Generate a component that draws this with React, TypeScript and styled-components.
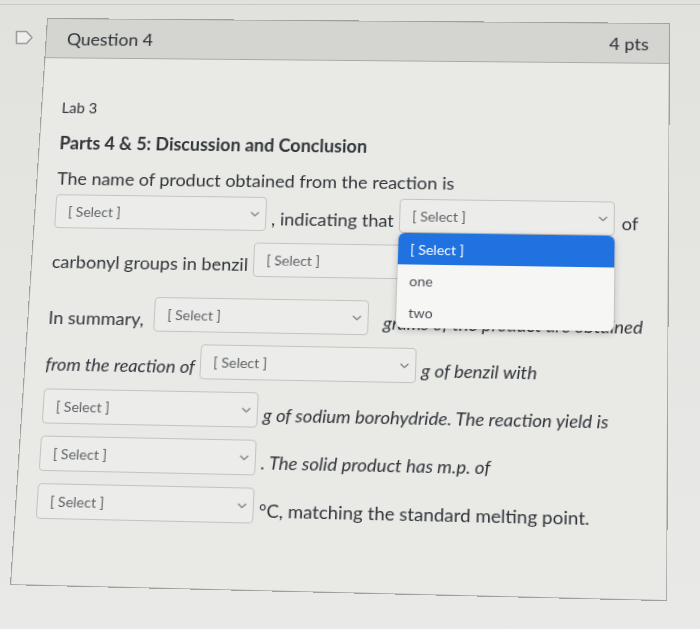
import React from 'react';
import styled, { createGlobalStyle } from 'styled-components';

const GlobalStyle = createGlobalStyle`
  html, body {
    margin: 0;
    padding: 0;
  }
  body {
    width: 700px;
    height: 629px;
    overflow: hidden;
    background: linear-gradient(180deg, #e1e2de 0%, #e5e6e2 45%, #e9e9e8 100%);
    font-family: Lato, "Open Sans", "Liberation Sans", sans-serif;
    color: #30353a;
  }
`;

const CARD_W = 630;
const CARD_H = 578;

// where the card's corners land in the photo, relative to its own top-left
const CARD_QUAD: number[][] = [
  [7, -2],
  [630, 3],
  [627, 581],
  [-30, 565],
];

// square-to-quad homography, as a css matrix3d
const quadToMatrix = (w: number, h: number, q: number[][]) => {
  const [[x0, y0], [x1, y1], [x2, y2], [x3, y3]] = q;
  const dx1 = x1 - x2;
  const dx2 = x3 - x2;
  const dx3 = x0 - x1 + x2 - x3;
  const dy1 = y1 - y2;
  const dy2 = y3 - y2;
  const dy3 = y0 - y1 + y2 - y3;
  const den = dx1 * dy2 - dx2 * dy1;
  const g = (dx3 * dy2 - dx2 * dy3) / den;
  const k = (dx1 * dy3 - dx3 * dy1) / den;
  const a = x1 - x0 + g * x1;
  const b = x3 - x0 + k * x3;
  const d = y1 - y0 + g * y1;
  const e = y3 - y0 + k * y3;
  const m = [a / w, d / w, 0, g / w, b / h, e / h, 0, k / h, 0, 0, 1, 0, x0, y0, 0, 1];
  return `matrix3d(${m.map((v) => v.toFixed(6)).join(',')})`;
};

const Page = styled.div`
  padding-top: 4px;
`;

const TopRule = styled.div`
  height: 1px;
  background: #c9cac6;
`;

const Stage = styled.div`
  display: flex;
  align-items: flex-start;
  padding: 15px 0 0 13px;
`;

const FlagSlot = styled.div`
  width: 27px;
  flex: none;
  padding: 9px 0 0 2px;
  box-sizing: border-box;
`;

const Card = styled.div`
  width: ${CARD_W}px;
  height: ${CARD_H}px;
  flex: none;
  box-sizing: border-box;
  border: 1px solid #9fa09d;
  background: #e9e9e6;
  transform-origin: 0 0;
  transform: ${quadToMatrix(CARD_W, CARD_H, CARD_QUAD)};
`;

const Header = styled.div`
  height: 42px;
  box-sizing: border-box;
  display: flex;
  align-items: center;
  justify-content: space-between;
  padding: 0 20px 0 21px;
  background: #d4d5d1;
  border-bottom: 1px solid #a9aaa7;
  font-size: 18px;
  color: #2c3136;
`;

const Body = styled.div`
  padding: 42px 20px 0 20px;
`;

const LabLine = styled.div`
  font-size: 15px;
  line-height: 21px;
`;

const Heading = styled.div`
  margin-top: 13px;
  font-size: 18px;
  line-height: 26px;
  font-weight: 700;
`;

const Para = styled.div`
  margin-top: 11px;
  font-size: 18px;
  line-height: 26px;
`;

const Row = styled.div<{ $gap?: number }>`
  display: flex;
  align-items: flex-end;
  gap: 5px;
  height: 35px;
  margin-top: ${(p) => p.$gap ?? 12}px;
`;

const Words = styled.span<{ $italic?: boolean; $lead?: number; $trail?: number }>`
  font-size: 18px;
  line-height: 26px;
  white-space: nowrap;
  font-style: ${(p) => (p.$italic ? 'italic' : 'normal')};
  padding-left: ${(p) => p.$lead ?? 0}px;
  padding-right: ${(p) => p.$trail ?? 0}px;
`;

const SelectBox = styled.div`
  position: relative;
  width: 212px;
  height: 35px;
  flex: none;
  box-sizing: border-box;
  display: flex;
  align-items: center;
  justify-content: space-between;
  padding: 0 6px 0 12px;
  border: 1px solid #c3c4c1;
  border-radius: 4px;
  background: #ecedea;
  font-size: 14px;
  color: #5f6366;
`;

const Menu = styled.div`
  position: absolute;
  top: calc(100% + 1px);
  left: -1px;
  right: -1px;
  z-index: 10;
  background: #f6f6f5;
  border-radius: 6px;
  overflow: hidden;
  box-shadow: 0 2px 7px rgba(0, 0, 0, 0.22), 0 0 0 1px rgba(0, 0, 0, 0.06);
`;

const MenuItem = styled.div<{ $active?: boolean }>`
  height: 32px;
  display: flex;
  align-items: center;
  padding-left: 12px;
  font-size: 14px;
  background: ${(p) => (p.$active ? '#1f72df' : 'transparent')};
  color: ${(p) => (p.$active ? '#ffffff' : '#4a4e52')};
`;

const Chevron = () => (
  <svg width="9" height="6" viewBox="0 0 9 6">
    <path d="M1 1.2 L4.5 4.6 L8 1.2" fill="none" stroke="#7d8083" strokeWidth="1.3" strokeLinecap="round" />
  </svg>
);

const FlagIcon = () => (
  <svg width="19" height="15" viewBox="0 0 19 15">
    <path
      d="M1.5 1.5 H11.5 L17 7.5 L11.5 13.5 H1.5 Z"
      fill="#eeeeec"
      stroke="#9c9ea0"
      strokeWidth="1.6"
      strokeLinejoin="round"
    />
  </svg>
);

const Select: React.FC<{ open?: boolean; options?: string[] }> = ({ open, options = [] }) => (
  <SelectBox>
    <span>[ Select ]</span>
    <Chevron />
    {open && (
      <Menu>
        <MenuItem $active>[ Select ]</MenuItem>
        {options.map((o) => (
          <MenuItem key={o}>{o}</MenuItem>
        ))}
      </Menu>
    )}
  </SelectBox>
);

export default function App() {
  return (
    <Page>
      <GlobalStyle />
      <TopRule />
      <Stage>
        <FlagSlot>
          <FlagIcon />
        </FlagSlot>
        <Card>
          <Header>
            <span>Question 4</span>
            <span>4 pts</span>
          </Header>
          <Body>
            <LabLine>Lab 3</LabLine>
            <Heading>Parts 4 &amp; 5: Discussion and Conclusion</Heading>
            <Para>The name of product obtained from the reaction is</Para>
            <Row $gap={4}>
              <Select />
              <Words>, indicating that</Words>
              <Select open options={['one', 'two']} />
              <Words $lead={2}>of</Words>
            </Row>
            <Row>
              <Words>carbonyl groups in benzil</Words>
              <Select />
            </Row>
            <Row $gap={22}>
              <Words $trail={5}>In summary,</Words>
              <Select />
              <Words $italic $lead={9}>
                grams of the product are obtained
              </Words>
            </Row>
            <Row>
              <Words $italic>from the reaction of</Words>
              <Select />
              <Words $italic>g of benzil with</Words>
            </Row>
            <Row>
              <Select />
              <Words $italic>g of sodium borohydride. The reaction yield is</Words>
            </Row>
            <Row>
              <Select />
              <Words $italic>. The solid product has m.p. of</Words>
            </Row>
            <Row>
              <Select />
              <Words>°C, matching the standard melting point.</Words>
            </Row>
          </Body>
        </Card>
      </Stage>
    </Page>
  );
}
